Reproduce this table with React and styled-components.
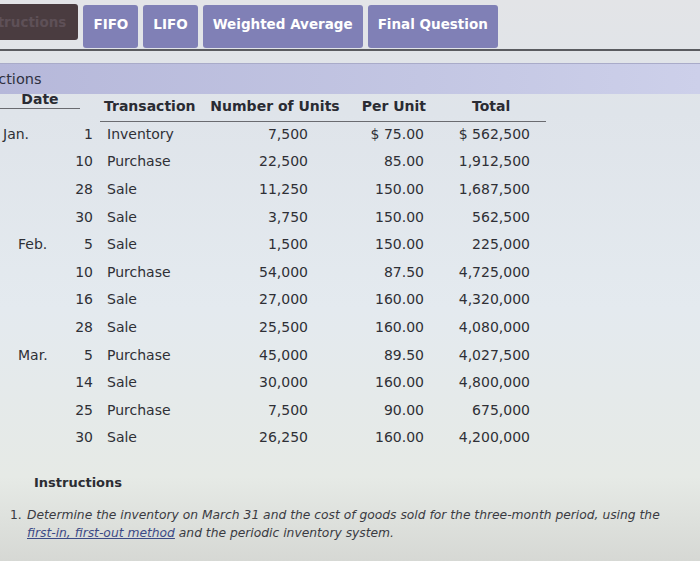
import React from 'react';
import styled, { createGlobalStyle } from 'styled-components';

const GlobalStyle = createGlobalStyle`
    body {
        margin: 0;
        font-family: "DejaVu Sans", Verdana, sans-serif;
        color: #2e2f36;
    }
`;

const Page = styled.div`
    width: 700px;
    height: 561px;
    overflow: hidden;
    background: linear-gradient(180deg, #e3e4e7 0%, #dfe4ea 20%, #e4eaef 55%, #e6eae6 85%, #d6d8d4 100%);
`;

const TabBar = styled.div`
    display: flex;
    align-items: flex-end;
    gap: 5px;
    height: 49px;
    border-bottom: 2px solid #5a5b60;
    overflow: hidden;
`;

const Tab = styled.div`
    height: ${p => (p.$dark ? '36px' : '43px')};
    margin-bottom: ${p => (p.$dark ? '9px' : '1px')};
    margin-left: ${p => (p.$first ? '-37px' : '0')};
    padding: 0 ${p => p.$pad || 10}px;
    padding-bottom: ${p => (p.$dark ? '0' : '6px')};
    display: flex;
    align-items: center;
    justify-content: center;
    background: ${p => (p.$dark ? '#4a3c40' : '#8080b6')};
    color: ${p => (p.$dark ? '#5e5057' : '#ffffff')};
    font-weight: bold;
    font-size: 13.5px;
    border-radius: 3px;
    white-space: nowrap;
    box-sizing: border-box;
`;

const Band = styled.div`
    margin-top: 12px;
    height: 30px;
    background: linear-gradient(90deg, #b6b8da 0%, #c3c6e3 60%, #cdd0ea 100%);
    border-top: 1px solid #a9abc9;
    overflow: hidden;
    font-size: 14.5px;
    line-height: 30px;
`;

const BandText = styled.span`
    display: inline-block;
    margin-left: -49px;
    color: #2f3040;
`;

const HeaderRow = styled.div`
    display: grid;
    grid-template-columns: 80px 20px 110px 130px 86px 120px;
    grid-template-rows: 25px;
    font-weight: bold;
    font-size: 14px;
    color: #2a2b33;
`;

const HeadCell = styled.div`
    height: ${p => p.$h || 28}px;
    margin-top: ${p => p.$mt || 0}px;
    text-align: ${p => p.$align || 'center'};
    border-bottom: 1.5px solid #6a6b70;
    padding-top: ${p => p.$top ?? 4}px;
    padding-left: ${p => p.$pl || 0}px;
    white-space: nowrap;
    box-sizing: border-box;
    align-self: start;
`;

const Body = styled.div`
    display: grid;
    grid-template-columns: 58px 36px 12px 104px 98px 118px 106px;
    grid-auto-rows: 27.6px;
    font-size: 14px;
    padding-top: 1px;
`;

const Cell = styled.div`
    display: flex;
    align-items: center;
    justify-content: ${p => (p.$right ? 'flex-end' : 'flex-start')};
    padding-left: ${p => p.$indent || 0}px;
    padding-right: ${p => p.$pr || 0}px;
    white-space: nowrap;
    color: #2f3036;
`;

const Instructions = styled.div`
    margin-top: 24px;
    padding-left: 10px;
`;

const InstrTitle = styled.div`
    font-weight: bold;
    font-size: 13px;
    padding-left: 24px;
    color: #2c2d33;
`;

const InstrText = styled.div`
    display: flex;
    margin-top: 16px;
    font-size: 12.3px;
    font-style: italic;
    line-height: 18px;
    color: #3a3b42;
`;

const Num = styled.span`
    width: 17px;
    flex-shrink: 0;
    font-style: normal;
`;

const Link = styled.span`
    color: #3c4a86;
    text-decoration: underline;
    white-space: nowrap;
`;

const rows = [
    ['Jan.', '1', 'Inventory', '7,500', '$ 75.00', '$ 562,500'],
    ['', '10', 'Purchase', '22,500', '85.00', '1,912,500'],
    ['', '28', 'Sale', '11,250', '150.00', '1,687,500'],
    ['', '30', 'Sale', '3,750', '150.00', '562,500'],
    ['Feb.', '5', 'Sale', '1,500', '150.00', '225,000'],
    ['', '10', 'Purchase', '54,000', '87.50', '4,725,000'],
    ['', '16', 'Sale', '27,000', '160.00', '4,320,000'],
    ['', '28', 'Sale', '25,500', '160.00', '4,080,000'],
    ['Mar.', '5', 'Purchase', '45,000', '89.50', '4,027,500'],
    ['', '14', 'Sale', '30,000', '160.00', '4,800,000'],
    ['', '25', 'Purchase', '7,500', '90.00', '675,000'],
    ['', '30', 'Sale', '26,250', '160.00', '4,200,000'],
];

export default function App() {
    return <Page>
        <GlobalStyle />
        <TabBar>
            <Tab $dark $first $pad={12}>Instructions</Tab>
            <Tab>FIFO</Tab>
            <Tab>LIFO</Tab>
            <Tab>Weighted Average</Tab>
            <Tab>Final Question</Tab>
        </TabBar>
        <Band>
            <BandText>Transactions</BandText>
        </Band>
        <HeaderRow>
            <HeadCell $h={18} $top={0} $mt={-3}>Date</HeadCell>
            <div />
            <HeadCell $align="left" $pl={4}>Transaction</HeadCell>
            <HeadCell>Number of Units</HeadCell>
            <HeadCell $align="right">Per Unit</HeadCell>
            <HeadCell $align="left" $pl={46}>Total</HeadCell>
        </HeaderRow>
        <Body>
            {rows.map((r, i) => (
                <React.Fragment key={i}>
                    <Cell $indent={i === 0 ? 3 : 18}>{r[0]}</Cell>
                    <Cell $right $pr={1}>{r[1]}</Cell>
                    <div />
                    <Cell $indent={1}>{r[2]}</Cell>
                    <Cell $right>{r[3]}</Cell>
                    <Cell $right $pr={2}>{r[4]}</Cell>
                    <Cell $right $pr={2}>{r[5]}</Cell>
                </React.Fragment>
            ))}
        </Body>
        <Instructions>
            <InstrTitle>Instructions</InstrTitle>
            <InstrText>
                <Num>1.</Num>
                <div>
                    Determine the inventory on March 31 and the cost of goods sold for the three-month period, using the{' '}
                    <Link>first-in, first-out method</Link> and the periodic inventory system.
                </div>
            </InstrText>
        </Instructions>
    </Page>;
}
